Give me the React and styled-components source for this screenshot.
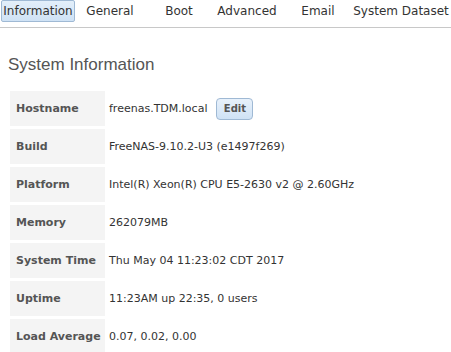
import React from 'react'
import styled, { createGlobalStyle } from 'styled-components'

const GlobalStyle = createGlobalStyle`
    body {
        margin: 0;
        background: #ffffff;
        font-family: "DejaVu Sans", Verdana, sans-serif;
        color: #333;
    }
`;

const tabs = [
    { label: "Information", width: 74, active: true },
    { label: "General", width: 70 },
    { label: "Boot", width: 68 },
    { label: "Advanced", width: 68 },
    { label: "Email", width: 74 },
    { label: "System Dataset", width: 92 },
];

const rows = [
    ["Hostname", "freenas.TDM.local", true],
    ["Build", "FreeNAS-9.10.2-U3 (e1497f269)"],
    ["Platform", "Intel(R) Xeon(R) CPU E5-2630 v2 @ 2.60GHz"],
    ["Memory", "262079MB"],
    ["System Time", "Thu May 04 11:23:02 CDT 2017"],
    ["Uptime", "11:23AM up 22:35, 0 users"],
    ["Load Average", "0.07, 0.02, 0.00"],
];

export default function App() {
    return (
        <>
        <GlobalStyle />
        <TabBar>
            {tabs.map((tab, index) => {
                return (
                    <Tab key={index} width={tab.width} active={tab.active}>
                        {tab.label}
                    </Tab>
                );
            })}
        </TabBar>
        <Title>System Information</Title>
        <InfoTable>
            {rows.map(([label, value, editable], index) => {
                return (
                    <React.Fragment key={index}>
                        <Label>{label}</Label>
                        <Value>
                            {value}
                            {editable && <EditButton>Edit</EditButton>}
                        </Value>
                    </React.Fragment>
                );
            })}
        </InfoTable>
        </>
    )
}

const TabBar = styled.div`
    display: flex;
    align-items: flex-start;
    height: 27px;
    padding-left: 1px;
    border-bottom: 1px solid #c8c8c8;
`;

const Tab = styled.div`
    box-sizing: border-box;
    flex: none;
    width: ${props => props.width}px;
    height: 22px;
    display: flex;
    align-items: center;
    justify-content: center;
    font-size: 12px;
    color: #333;
    white-space: nowrap;
    border: 1px solid ${props => props.active ? '#9fb9d4' : 'transparent'};
    border-radius: 2px;
    background: ${props => props.active ? 'linear-gradient(#e3effa, #cfe2f5)' : 'transparent'};
`;

const Title = styled.h2`
    margin: 27px 0 0 8px;
    font-family: "Liberation Sans", Arial, sans-serif;
    font-weight: normal;
    font-size: 17px;
    color: #555;
    line-height: 20px;
`;

const InfoTable = styled.div`
    display: grid;
    grid-template-columns: 95px 1fr;
    grid-auto-rows: 35px;
    row-gap: 3px;
    margin: 16px 0 0 10px;
`;

const Label = styled.div`
    display: flex;
    align-items: center;
    padding-left: 6px;
    background: #f4f4f4;
    font-size: 11px;
    font-weight: bold;
    color: #555;
    white-space: nowrap;
`;

const Value = styled.div`
    display: flex;
    align-items: center;
    padding-left: 4px;
    font-size: 11px;
    color: #333;
    white-space: nowrap;
`;

const EditButton = styled.button`
    box-sizing: border-box;
    width: 37px;
    height: 22px;
    margin-left: 9px;
    padding: 0;
    font-family: inherit;
    font-size: 10px;
    font-weight: bold;
    color: #555;
    border: 1px solid #9fb9d4;
    border-radius: 4px;
    background: linear-gradient(#e8f1fb, #cfe2f5);
`;
